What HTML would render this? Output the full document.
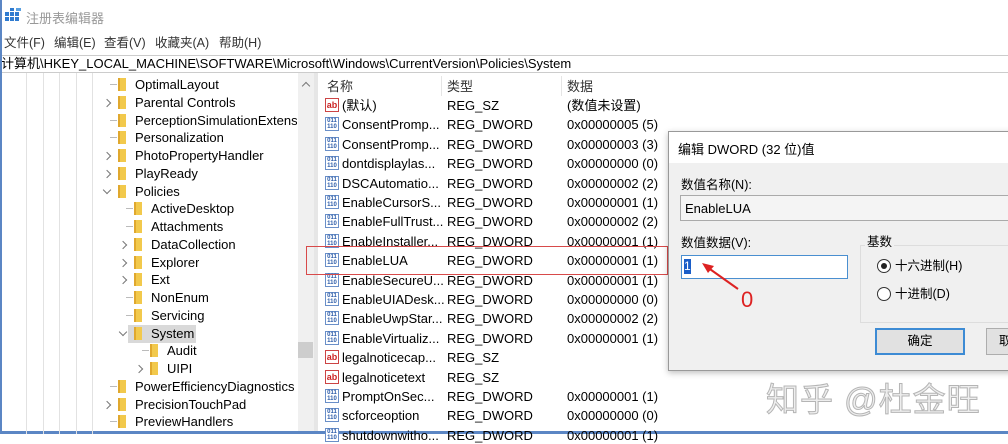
<!DOCTYPE html>
<html><head><meta charset="utf-8"><style>
*{margin:0;padding:0;box-sizing:border-box}
body{width:1008px;height:434px;overflow:hidden;background:#fff;position:relative;font-family:"Liberation Sans","Noto Sans CJK SC",sans-serif;font-size:13px;color:#000}
.a{position:absolute;white-space:nowrap;line-height:17px}
.vl{position:absolute;top:73px;height:361px;width:1px;background:#e2e2e2}
.fd{position:absolute;width:8px;height:13px;background:#f2c94c;border-left:2px solid #e0a82e}
.ar{position:absolute;width:6px;height:6px;border-right:1.3px solid #777;border-bottom:1.3px solid #777}
.rg{position:absolute;width:14px;height:14px;border:1px solid #6a8fc8;background:#fff;font-size:6px;line-height:6px;color:#2a5aa8;text-align:center;font-weight:bold}
.ab{position:absolute;width:14px;height:14px;border:1px solid #c44;background:#fff;color:#c22;font-size:9px;line-height:12px;text-align:center;font-weight:bold}
.m{position:absolute;top:35px;color:#333;font-size:12.5px;line-height:17px}
</style></head><body>
<svg class="a" style="left:5px;top:8px" width="17" height="16"><g fill="#2f7bd0"><rect x="0" y="4" width="4" height="4"/><rect x="5" y="4" width="4" height="4"/><rect x="10" y="4" width="4" height="4"/><rect x="0" y="9" width="4" height="4"/><rect x="5" y="9" width="4" height="4"/><rect x="10" y="9" width="4" height="4"/><rect x="5" y="0" width="4" height="3"/><rect x="11" y="0" width="5" height="3" fill="#5aa0e0"/></g></svg>
<div class="a" style="left:26px;top:10px;color:#999;font-size:13px">注册表编辑器</div>
<div class="m" style="left:4px">文件(F)</div>
<div class="m" style="left:54px">编辑(E)</div>
<div class="m" style="left:104px">查看(V)</div>
<div class="m" style="left:155px">收藏夹(A)</div>
<div class="m" style="left:219px">帮助(H)</div>
<div class="a" style="left:0;top:55px;width:1008px;height:18px;border-top:1px solid #ccc;border-bottom:1px solid #ccc"></div>
<div class="a" style="left:1px;top:55px;font-size:13px">计算机\HKEY_LOCAL_MACHINE\SOFTWARE\Microsoft\Windows\CurrentVersion\Policies\System</div>
<div class="a" style="left:0;top:0;width:2px;height:434px;background:#5b86c4"></div>
<div class="a" style="left:0;top:431px;width:1008px;height:3px;background:#5b86c4"></div>
<div class="vl" style="left:26px"></div><div class="vl" style="left:43px"></div><div class="vl" style="left:59px"></div><div class="vl" style="left:76px"></div><div class="vl" style="left:92px"></div>
<div class="a" style="left:298px;top:73px;width:16px;height:358px;background:#f0f0f0"></div>
<div class="ar" style="left:303px;top:83px;transform:rotate(-135deg)"></div>
<div class="a" style="left:298px;top:342px;width:15px;height:16px;background:#cdcdcd"></div>
<div class="a" style="left:314px;top:73px;width:4px;height:358px;background:#e6e6e6"></div>
<div class="a" style="left:128px;top:325px;width:68px;height:18px;background:#d9d9d9"></div>
<div id="t"></div>
<div class="a" style="left:441px;top:76px;width:1px;height:20px;background:#e5e5e5"></div>
<div class="a" style="left:561px;top:76px;width:1px;height:20px;background:#e5e5e5"></div>
<div class="a" style="left:327px;top:78px;color:#333">名称</div>
<div class="a" style="left:447px;top:78px;color:#333">类型</div>
<div class="a" style="left:567px;top:78px;color:#333">数据</div>
<div id="r"></div>
<div class="a" style="left:306px;top:246px;width:362px;height:29px;border:1.5px solid #d84a4a"></div>
<div class="a" style="left:668px;top:131px;width:345px;height:240px;background:#f0f0f0;border:1px solid #999;box-shadow:0 2px 6px rgba(0,0,0,.25)">
<div style="position:absolute;left:0;top:0;width:100%;height:31px;background:#fff"></div>
<div class="a" style="left:9px;top:9px;font-size:13px">编辑 DWORD (32 位)值</div>
<div class="a" style="left:12px;top:45px;font-size:12.5px">数值名称(N):</div>
<div class="a" style="left:11px;top:63px;width:340px;height:26px;border:1px solid #aaa;background:#f4f4f4;padding:4px 4px;font-size:13px">EnableLUA</div>
<div class="a" style="left:12px;top:103px;font-size:12.5px">数值数据(V):</div>
<div class="a" style="left:12px;top:123px;width:167px;height:24px;border:1px solid #4a8fd0;background:#fff"></div>
<div class="a" style="left:15px;top:127px;width:7px;height:15px;background:#1a5ec8;color:#fff;font-size:12px;line-height:15px">1</div>
<div class="a" style="left:191px;top:113px;width:160px;height:78px;border:1px solid #ddd"></div>
<div class="a" style="left:196px;top:102px;background:#f0f0f0;padding:0 2px;font-size:12.5px">基数</div>
<div class="a" style="left:208px;top:127px;width:14px;height:14px;border:1px solid #333;border-radius:50%;background:#fff"><div style="margin:3px;width:6px;height:6px;border-radius:50%;background:#222"></div></div>
<div class="a" style="left:226px;top:126px;font-size:12.5px">十六进制(H)</div>
<div class="a" style="left:208px;top:155px;width:14px;height:14px;border:1px solid #333;border-radius:50%;background:#fff"></div>
<div class="a" style="left:226px;top:154px;font-size:12.5px">十进制(D)</div>
<div class="a" style="left:206px;top:196px;width:90px;height:27px;border:2px solid #3d8bd4;background:#e1e1e1;text-align:center;line-height:23px;font-size:12.5px">确定</div>
<div class="a" style="left:317px;top:196px;width:60px;height:27px;border:1px solid #adadad;background:#e1e1e1;padding-left:12px;line-height:25px;font-size:12.5px">取消</div>
</div>
<svg class="a" style="left:690px;top:255px" width="60" height="40"><line x1="48" y1="34" x2="17" y2="12" stroke="#d22" stroke-width="2"/><polygon points="12,8 24,11 18,18" fill="#d22"/></svg>
<div class="a" style="left:741px;top:288px;color:#d22;font-size:22px;line-height:24px">0</div>
<div class="a" style="left:766px;top:380px;font-size:33px;line-height:40px;color:#eee;-webkit-text-stroke:1px #b5b5b5;letter-spacing:1px">知乎 @杜金旺</div>
<script>
var tr=[[1,0,'OptimalLayout'],[1,1,'Parental Controls'],[1,0,'PerceptionSimulationExtens'],[1,0,'Personalization'],[1,1,'PhotoPropertyHandler'],[1,1,'PlayReady'],[1,2,'Policies'],[2,0,'ActiveDesktop'],[2,0,'Attachments'],[2,1,'DataCollection'],[2,1,'Explorer'],[2,1,'Ext'],[2,0,'NonEnum'],[2,0,'Servicing'],[2,2,'System'],[3,0,'Audit'],[3,1,'UIPI'],[1,0,'PowerEfficiencyDiagnostics'],[1,1,'PrecisionTouchPad'],[1,0,'PreviewHandlers']];
var h='';tr.forEach(function(e,i){var y=76+i*17.75,l=e[0],fx=102+16*l,tx=119+16*l;
if(e[1]==1)h+='<div class="ar" style="left:'+(fx-14)+'px;top:'+(y+6)+'px;transform:rotate(-45deg)"></div>';
if(e[1]==2)h+='<div class="ar" style="left:'+(fx-14)+'px;top:'+(y+4)+'px;transform:rotate(45deg)"></div>';
if(e[1]==0)h+='<div class="a" style="left:'+(fx-8)+'px;top:'+(y+8)+'px;width:7px;height:1px;background:#bbb"></div>';
h+='<div class="fd" style="left:'+fx+'px;top:'+(y+2)+'px"></div><div class="a" style="left:'+tx+'px;top:'+y+'px;max-width:'+(297-tx)+'px;overflow:hidden">'+e[2]+'</div>';});
document.getElementById('t').innerHTML=h;
var rr=[['a','(默认)','REG_SZ','(数值未设置)'],['r','ConsentPromp...','REG_DWORD','0x00000005 (5)'],['r','ConsentPromp...','REG_DWORD','0x00000003 (3)'],['r','dontdisplaylas...','REG_DWORD','0x00000000 (0)'],['r','DSCAutomatio...','REG_DWORD','0x00000002 (2)'],['r','EnableCursorS...','REG_DWORD','0x00000001 (1)'],['r','EnableFullTrust...','REG_DWORD','0x00000002 (2)'],['r','EnableInstaller...','REG_DWORD','0x00000001 (1)'],['r','EnableLUA','REG_DWORD','0x00000001 (1)'],['r','EnableSecureU...','REG_DWORD','0x00000001 (1)'],['r','EnableUIADesk...','REG_DWORD','0x00000000 (0)'],['r','EnableUwpStar...','REG_DWORD','0x00000002 (2)'],['r','EnableVirtualiz...','REG_DWORD','0x00000001 (1)'],['a','legalnoticecap...','REG_SZ',''],['a','legalnoticetext','REG_SZ',''],['r','PromptOnSec...','REG_DWORD','0x00000001 (1)'],['r','scforceoption','REG_DWORD','0x00000000 (0)'],['r','shutdownwitho...','REG_DWORD','0x00000001 (1)']];
h='';rr.forEach(function(e,i){var y=97+i*19.4;
h+=e[0]=='a'?'<div class="ab" style="left:325px;top:'+(y+1)+'px">ab</div>':'<div class="rg" style="left:325px;top:'+(y+1)+'px">011<br>110</div>';
h+='<div class="a" style="left:342px;top:'+y+'px">'+e[1]+'</div><div class="a" style="left:447px;top:'+y+'px">'+e[2]+'</div><div class="a" style="left:567px;top:'+y+'px">'+e[3]+'</div>';});
document.getElementById('r').innerHTML=h;
</script>
</body></html>
